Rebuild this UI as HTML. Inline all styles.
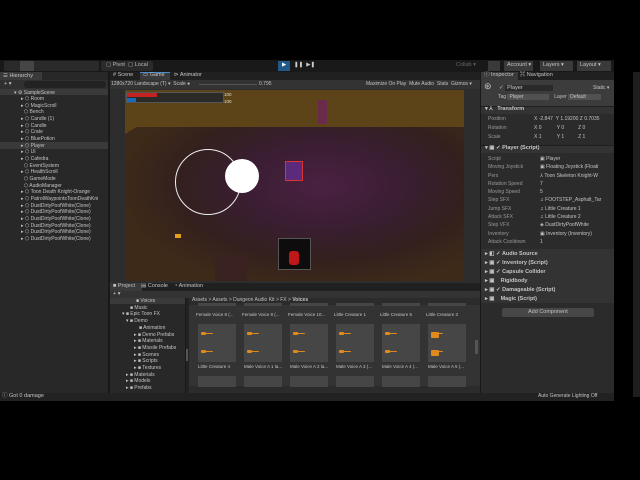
<!DOCTYPE html><html><head><style>
*{margin:0;padding:0;box-sizing:border-box}
body{width:640px;height:480px;background:#000;position:relative;overflow:hidden;font-family:"Liberation Sans",sans-serif;font-size:5.5px;color:#c4c4c4}
.a{position:absolute}
.t{position:absolute;white-space:nowrap;line-height:7px}
.hdr{position:absolute;left:0;width:133px;height:8px;border-top:1px solid #1e1e1e;background:#333}
.tile{position:absolute;width:38px;height:38px;background:#464646}
.wav{position:absolute;background:#e08a1c;height:2px;border-radius:1px}
</style></head><body>
<div class="a" style="left:0;top:60px;width:614px;height:340px;background:#191919"></div>
<div class="a" style="left:4px;top:61px;width:95px;height:10px;background:#2a2a2a;border-radius:2px"></div>
<div class="a" style="left:20px;top:61px;width:14px;height:10px;background:#464646"></div>
<div class="a" style="left:101px;top:61px;width:52px;height:10px;background:#2a2a2a;border-radius:2px"></div>
<div class="t" style="left:106px;top:62px;color:#bbb">▢ Pivot &nbsp;▢ Local</div>
<div class="a" style="left:278px;top:61px;width:12px;height:10px;background:#1f5a8a"></div>
<div class="t" style="left:282px;top:62px;color:#fff">▶</div>
<div class="t" style="left:294px;top:62px;color:#ccc">❚❚ &nbsp;▶❚</div>
<div class="t" style="left:456px;top:62px;color:#666">Collab ▾</div>
<div class="a" style="left:488px;top:61px;width:12px;height:10px;background:#3a3a3a"></div>
<div class="a" style="left:504px;top:61px;width:29px;height:10px;background:#3a3a3a"></div>
<div class="t" style="left:507px;top:62px">Account ▾</div>
<div class="a" style="left:540px;top:61px;width:33px;height:10px;background:#3a3a3a"></div>
<div class="t" style="left:543px;top:62px">Layers ▾</div>
<div class="a" style="left:577px;top:61px;width:34px;height:10px;background:#3a3a3a"></div>
<div class="t" style="left:580px;top:62px">Layout ▾</div>
<!-- hierarchy -->
<div class="a" style="left:0;top:72px;width:108px;height:321px;background:#282828"></div>
<div class="a" style="left:0;top:72px;width:42px;height:8px;background:#3a3a3a"></div>
<div class="t" style="left:3px;top:73px">☰ Hierarchy</div>
<div class="a" style="left:0;top:80px;width:108px;height:9px;background:#303030"></div>
<div class="t" style="left:4px;top:81px">+ ▾</div>
<div class="a" style="left:24px;top:81px;width:82px;height:7px;background:#222;border-radius:3px"></div>
<div class="a" style="left:0;top:89px;width:108px;height:6px;background:#3a3a3a"></div>
<div class="a" style="left:0;top:142px;width:108px;height:7px;background:#3a3a3a"></div>
<div class="a" style="left:14px;top:89.5px;width:95px;line-height:6.65px;font-size:5px">
<div>▾ ⚙ SampleScene</div>
<div style="padding-left:7px">▸ ⬡ Room<br>▸ ⬡ MagicScroll<br>&nbsp;&nbsp;⬡ Bench<br>▸ ⬡ Candle (1)<br>▸ ⬡ Candle<br>▸ ⬡ Crate<br>▸ ⬡ BluePotion<br>▸ ⬡ Player<br>▸ ⬡ UI<br>▸ ⬡ Cafedra<br>&nbsp;&nbsp;⬡ EventSystem<br>▸ ⬡ HealthScroll<br>&nbsp;&nbsp;⬡ GameMode<br>&nbsp;&nbsp;⬡ AudioManager<br>▸ ⬡ Toon Death Knight-Orange<br>▸ ⬡ PatrolWaypointsToonDeathKni<br>▸ ⬡ DustDirtyPoofWhite(Clone)<br>▸ ⬡ DustDirtyPoofWhite(Clone)<br>▸ ⬡ DustDirtyPoofWhite(Clone)<br>▸ ⬡ DustDirtyPoofWhite(Clone)<br>▸ ⬡ DustDirtyPoofWhite(Clone)<br>▸ ⬡ DustDirtyPoofWhite(Clone)</div></div>
<!-- game tabs -->
<div class="a" style="left:110px;top:72px;width:370px;height:8px;background:#202020"></div>
<div class="t" style="left:113px;top:72px"># Scene</div>
<div class="a" style="left:140px;top:72px;width:30px;height:8px;background:#3a3a3a;border-top:1px solid #4a8ad0"></div>
<div class="t" style="left:143px;top:72px">▭ Game</div>
<div class="t" style="left:174px;top:72px">⊳ Animator</div>
<div class="a" style="left:110px;top:80px;width:370px;height:9px;background:#333"></div>
<div class="t" style="left:111px;top:81px;font-size:5px">1280x720 Landscape (T) ▾ &nbsp;Scale ●</div>
<div class="a" style="left:199px;top:84px;width:58px;height:1px;background:#555"></div>
<div class="t" style="left:259px;top:81px;font-size:5px">0.795</div>
<div class="t" style="left:366px;top:81px;font-size:5px">Maximize On Play &nbsp;Mute Audio &nbsp;Stats &nbsp;Gizmos ▾</div>
<div class="a" style="left:110px;top:89px;width:370px;height:194px;background:#2d2d2d"></div>
<!-- game -->
<div class="a" style="left:125px;top:90px;width:339px;height:191px;background:radial-gradient(ellipse 60% 55% at 58% 50%,#4a2042 0%,#3a1e32 40%,#33201e 70%,#3e2a18 100%)"></div>
<div class="a" style="left:125px;top:90px;width:339px;height:37px;background:#5c4418"></div>
<div class="a" style="left:125px;top:122px;width:20px;height:12px;background:#5c4418;clip-path:polygon(0 0,100% 0,0 100%)"></div>
<div class="a" style="left:126px;top:92px;width:98px;height:11px;background:#2c2a26;border:1px solid #555"></div>
<div class="a" style="left:127px;top:93px;width:30px;height:4px;background:#c52222"></div>
<div class="a" style="left:127px;top:98px;width:9px;height:4px;background:#1a6ab8"></div>
<div class="t" style="left:224px;top:91px;font-size:4.5px;color:#ddd">100</div>
<div class="t" style="left:224px;top:98px;font-size:4.5px;color:#ddd">100</div>
<div class="a" style="left:175px;top:149px;width:66px;height:66px;border:1.5px solid #eee;border-radius:50%"></div>
<div class="a" style="left:225px;top:159px;width:34px;height:34px;background:#fff;border-radius:50%"></div>
<div class="a" style="left:285px;top:161px;width:18px;height:20px;background:#5b2a7a;border:1.5px solid #d33"></div>
<div class="a" style="left:318px;top:100px;width:9px;height:24px;background:#6a2a4a"></div>
<div class="a" style="left:175px;top:234px;width:6px;height:4px;background:#e0a020"></div>
<div class="a" style="left:278px;top:238px;width:33px;height:32px;background:#0e0c0c;border:1px solid #555"></div>
<div class="a" style="left:289px;top:251px;width:10px;height:14px;background:#c01818;border-radius:3px"></div>
<div class="a" style="left:215px;top:255px;width:32px;height:26px;background:#3a2220"></div>
<!-- project -->
<div class="a" style="left:110px;top:283px;width:370px;height:8px;background:#202020"></div>
<div class="a" style="left:110px;top:283px;width:32px;height:8px;background:#3a3a3a"></div>
<div class="t" style="left:113px;top:283px">■ Project &nbsp;&nbsp;&nbsp;▤ Console &nbsp;&nbsp;&nbsp;◔ Animation</div>
<div class="a" style="left:110px;top:291px;width:370px;height:7px;background:#333"></div>
<div class="t" style="left:113px;top:291px">+ ▾</div>
<div class="a" style="left:110px;top:298px;width:75px;height:95px;background:#282828"></div>
<div class="a" style="left:110px;top:298px;width:75px;height:6px;background:#3a3a3a"></div>
<div class="a" style="left:122px;top:298px;width:65px;line-height:6.7px;font-size:5px">
<div style="padding-left:14px">■ Voices</div><div style="padding-left:8px">■ Music</div><div>▾ ■ Epic Toon FX</div><div style="padding-left:4px">▾ ■ Demo</div><div style="padding-left:17px">■ Animation</div><div style="padding-left:12px">▸ ■ Demo Prefabs</div><div style="padding-left:12px">▸ ■ Materials</div><div style="padding-left:12px">▸ ■ Missile Prefabs</div><div style="padding-left:12px">▸ ■ Scenes</div><div style="padding-left:12px">▸ ■ Scripts</div><div style="padding-left:12px">▸ ■ Textures</div><div style="padding-left:4px">▸ ■ Materials</div><div style="padding-left:4px">▸ ■ Models</div><div style="padding-left:4px">▸ ■ Prefabs</div></div>
<div class="a" style="left:186px;top:298px;width:3px;height:95px;background:#222"></div>
<div class="a" style="left:186px;top:349px;width:2px;height:12px;background:#555"></div>
<div class="a" style="left:189px;top:298px;width:291px;height:95px;background:#333"></div>
<div class="a" style="left:189px;top:298px;width:291px;height:7px;background:#2b2b2b"></div>
<div class="t" style="left:192px;top:297px;font-size:5px">Assets &gt; Assets &gt; Dungeon Audio Kit &gt; FX &gt; <b>Voices</b></div>
<div class="a" style="left:189px;top:386px;width:291px;height:7px;background:#2b2b2b"></div>
<div class="a" style="left:475px;top:340px;width:3px;height:14px;background:#555"></div>
<div id="tiles"></div>
<!-- inspector -->
<div class="a" style="left:481px;top:72px;width:133px;height:321px;background:#2b2b2b"></div>
<div class="a" style="left:481px;top:72px;width:133px;height:8px;background:#202020"></div>
<div class="a" style="left:481px;top:72px;width:37px;height:8px;background:#3a3a3a"></div>
<div class="t" style="left:484px;top:72px">ⓘ Inspector &nbsp;&nbsp;&nbsp;⌘ Navigation</div>
<div class="a" style="left:481px;top:80px;width:133px;height:27px;background:#3c3c3c"></div>
<div class="t" style="left:484px;top:83px;font-size:9px">⊛</div>
<div class="t" style="left:499px;top:85px">✓ <span style="background:#2a2a2a;padding:0 30px 0 2px">Player</span></div>
<div class="t" style="left:593px;top:85px;font-size:5px">Static ▾</div>
<div class="t" style="left:498px;top:94px;font-size:5px">Tag <span style="background:#515151;padding:0 25px 0 2px">Player</span> &nbsp;&nbsp;&nbsp;Layer <span style="background:#515151;padding:0 15px 0 2px">Default</span></div>
<div class="hdr" style="left:481px;top:106px"></div><div class="t" style="left:485px;top:106px;font-weight:bold">▾ ⅄ &nbsp;&nbsp;Transform</div>
<div class="t" style="left:488px;top:115px;font-size:5px;color:#999;line-height:9px">Position<br>Rotation<br>Scale</div>
<div class="t" style="left:534px;top:115px;font-size:5px;line-height:9px">X -2.847 &nbsp;Y 1.19200 Z 0.7035<br>X 0 &nbsp;&nbsp;&nbsp;&nbsp;&nbsp;&nbsp;&nbsp;&nbsp;&nbsp;&nbsp;Y 0 &nbsp;&nbsp;&nbsp;&nbsp;&nbsp;&nbsp;&nbsp;&nbsp;&nbsp;Z 0<br>X 1 &nbsp;&nbsp;&nbsp;&nbsp;&nbsp;&nbsp;&nbsp;&nbsp;&nbsp;&nbsp;Y 1 &nbsp;&nbsp;&nbsp;&nbsp;&nbsp;&nbsp;&nbsp;&nbsp;&nbsp;Z 1</div>
<div class="hdr" style="left:481px;top:145px"></div><div class="t" style="left:485px;top:145px;font-weight:bold">▾ ▣ ✓ Player (Script)</div>
<div class="t" style="left:488px;top:155px;font-size:5px;color:#999;line-height:8.3px">Script<br>Moving Joystick<br>Pers<br>Rotation Speed<br>Moving Speed<br>Step SFX<br>Jump SFX<br>Attack SFX<br>Step VFX<br>Inventory<br>Attack Cooldown</div>
<div class="t" style="left:540px;top:155px;font-size:5px;line-height:8.3px">▣ Player<br>▣ Floating Joystick (Floati<br>⅄ Toon Skeleton Knight-W<br>7<br>5<br>♫ FOOTSTEP_Asphalt_Tar<br>♫ Little Creature 1<br>♫ Little Creature 2<br>◈ DustDirtyPoofWhite<br>▣ Inventory (Inventory)<br>1</div>
<div class="a" style="left:481px;top:249px;width:133px;height:54px;background:#333"></div>
<div class="t" style="left:485px;top:250px;font-weight:bold;line-height:9px">▸ ◧ ✓ Audio Source<br>▸ ▣ ✓ Inventory (Script)<br>▸ ▣ ✓ Capsule Collider<br>▸ ▣ &nbsp;&nbsp;&nbsp;Rigidbody<br>▸ ▣ ✓ Damageable (Script)<br>▸ ▣ &nbsp;&nbsp;&nbsp;Magic (Script)</div>
<div class="a" style="left:502px;top:308px;width:92px;height:9px;background:#474747;border-radius:2px"></div>
<div class="t" style="left:528px;top:309px">Add Component</div>
<div class="a" style="left:0;top:393px;width:614px;height:8px;background:#222"></div>
<div class="t" style="left:2px;top:393px">ⓘ Got 0 damage</div>
<div class="t" style="left:538px;top:393px;font-size:5px">Auto Generate Lighting Off</div>
<div class="a" style="left:633px;top:72px;width:7px;height:325px;background:#1e1e1e"></div>
<script>
var s='',xs=[198,244,290,336,382,428],l1=['Female Voice 8 (...','Female Voice 9 (...','Female Voice 10...','Little Creature 1','Little Creature 5','Little Creature 3'],l2=['Little Creature 4','Male Voice A 1 la...','Male Voice A 2 la...','Male Voice A 3 (...','Male Voice A 4 (...','Male Voice A 5 (...'];
xs.forEach(function(x,i){s+='<div class="tile" style="left:'+x+'px;top:303px;height:3px"></div><div class="t" style="left:'+(x-2)+'px;top:311px;font-size:4.5px">'+l1[i]+'</div><div class="tile" style="left:'+x+'px;top:324px"></div>';
var w=i==5?8:5;s+='<div class="wav" style="left:'+(x+3)+'px;top:332px;width:'+w+'px;height:'+(i==5?6:3)+'px"></div><div class="wav" style="left:'+(x+3)+'px;top:333px;width:12px;height:1px"></div><div class="wav" style="left:'+(x+3)+'px;top:350px;width:'+w+'px;height:'+(i==5?6:3)+'px"></div><div class="wav" style="left:'+(x+3)+'px;top:351px;width:12px;height:1px"></div>';
s+='<div class="t" style="left:'+x+'px;top:363px;font-size:4.5px">'+l2[i]+'</div><div class="tile" style="left:'+x+'px;top:376px;height:11px"></div>'});
document.getElementById('tiles').innerHTML=s;
</script>
</body></html>
